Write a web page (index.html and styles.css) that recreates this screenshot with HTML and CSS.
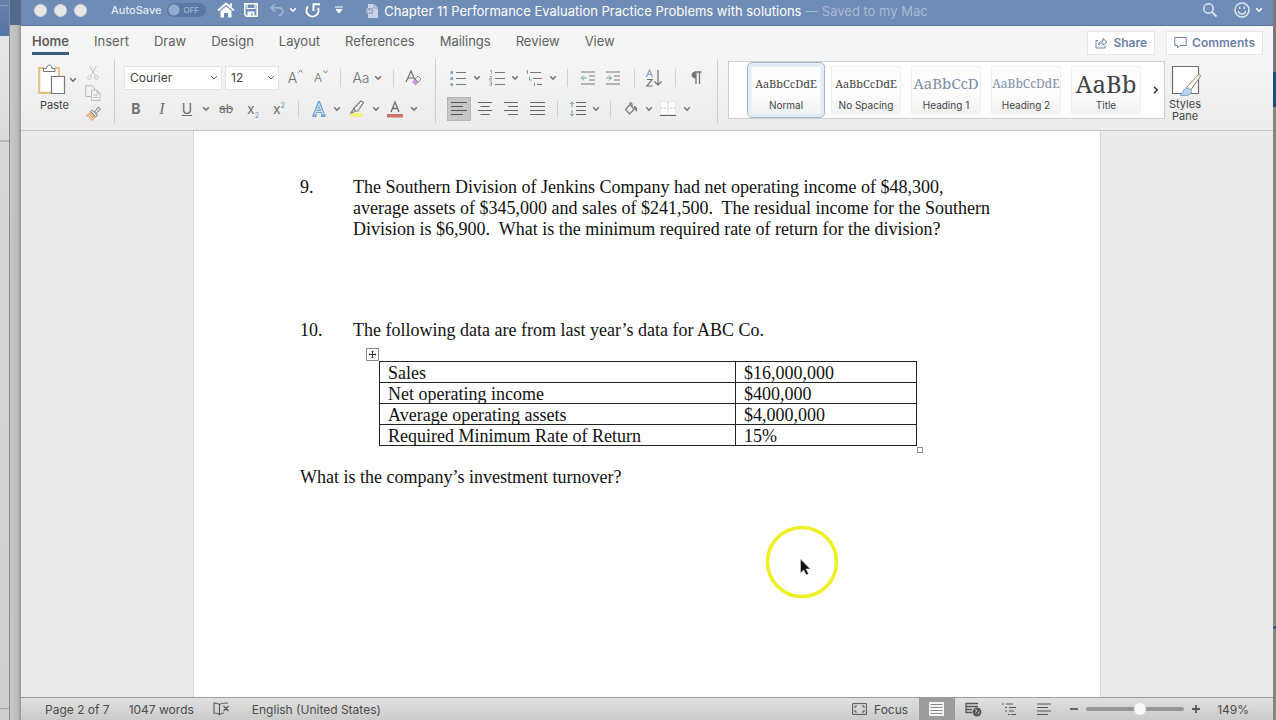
FILE: index.html
```html
<!DOCTYPE html>
<html lang="en">
<head>
<meta charset="utf-8">
<title>Chapter 11 Performance Evaluation Practice Problems with solutions</title>
<link rel="stylesheet" href="styles.css">
</head>
<body>
<svg class="defs" aria-hidden="true">
  <symbol id="chev" viewBox="0 0 8 6"><path d="M1.200 1.300L4 4.200l2.800-2.900" fill="none" stroke="currentColor" stroke-width="1.500"/></symbol>
</svg>
<div class="desktop">
  <div class="behind-a"></div>
  <div class="behind-b"></div>
  <div class="window">
    <header class="titlebar">
      <div class="title-left">
        <div class="lights"><button aria-label="Close"></button><button aria-label="Minimize"></button><button aria-label="Zoom"></button></div>
        <label class="autosave"><span>AutoSave</span><span class="toggle"><input type="checkbox"><span class="off">OFF</span></span></label>
        <div class="quick">
          <button aria-label="Home"><svg width="18" height="16" viewBox="0 0 18 16"><path d="M1 8.500L9 1.500l8 7" fill="none" stroke="#fff" stroke-width="1.800"/><path d="M3.500 9L9 4.300 14.500 9v6.500H11V11H7v4.500H3.500z" fill="#fff"/><path d="M13 1.500h2V5l-2-1.500z" fill="#fff"/></svg></button>
          <button aria-label="Save"><svg width="16" height="16" viewBox="0 0 16 16"><path d="M1.800 1.800h12.400v12.400H3.500l-1.700-1.700z" fill="none" stroke="#fff" stroke-width="1.600"/><path d="M4 2v4.500h8V2" fill="none" stroke="#fff" stroke-width="1.200"/><path d="M4.500 9.500h7V14h-2v-2.500H8V14H4.500z" fill="#fff"/></svg></button>
          <button aria-label="Undo" class="dim"><svg width="16" height="14" viewBox="0 0 16 14"><path d="M6 1L2 4.800l4 3.800M2 4.800h8c5 0 5 7-.5 7.700" fill="none" stroke="currentColor" stroke-width="1.700"/></svg></button>
          <button aria-label="Undo options"><svg width="8" height="6"><use href="#chev"/></svg></button>
          <button aria-label="Repeat"><svg width="18" height="16" viewBox="0 0 18 16"><path d="M4 4.500A6 6 0 1 0 14 6M9.500 9V2.200H16" fill="none" stroke="#fff" stroke-width="2"/></svg></button>
          <button aria-label="Customize toolbar"><svg width="8" height="8" viewBox="0 0 8 8"><path d="M0 1h8M1 3.500h6L4 7z" fill="#fff" stroke="#fff"/></svg></button>
        </div>
      </div>
      <h1 class="doc-title"><svg width="12" height="14" viewBox="0 0 12 14"><path d="M2 0h6l4 4v10H2z" fill="#c8d2e3"/><path d="M8 0v4h4" fill="none" stroke="#8ba0c4"/><path d="M0 4h7v6H0z" fill="#93a7c8"/><path d="M1.500 5.500l1 3 1-2 1 2 1-3" fill="none" stroke="#dce3ee" stroke-width=".8"/></svg><span>Chapter 11 Performance Evaluation Practice Problems with solutions <span class="saved">— Saved to my Mac</span></span></h1>
      <div class="title-right">
        <button aria-label="Search"><svg width="16" height="16" viewBox="0 0 16 16"><circle cx="6.500" cy="6.500" r="4.700" fill="none" stroke="#dfe6f1" stroke-width="1.500"/><path d="M10 10l4.500 4.500" stroke="#dfe6f1" stroke-width="1.800"/></svg></button>
        <button aria-label="Feedback"><svg width="16" height="16" viewBox="0 0 16 16"><circle cx="8" cy="8" r="7" fill="none" stroke="#dfe6f1" stroke-width="1.500"/><path d="M5.700 4.500v2.500M10.300 4.500v2.500M4.200 9c1 4 6.600 4 7.600 0" fill="none" stroke="#dfe6f1" stroke-width="1.300"/></svg></button>
        <button aria-label="Feedback options"><svg width="8" height="6"><use href="#chev"/></svg></button>
      </div>
    </header>

    <nav class="tabs">
      <a href="#" class="active">Home</a><a href="#">Insert</a><a href="#">Draw</a><a href="#">Design</a><a href="#">Layout</a><a href="#">References</a><a href="#">Mailings</a><a href="#">Review</a><a href="#">View</a>
      <div class="tab-actions">
        <button><svg width="13" height="13" viewBox="0 0 13 13"><path d="M3 4.500H1v7.500h9V9.500M3.500 9C4 6 5.500 5 8 5V2.500L12 6 8 9.300V7C6 7 4.500 7.500 3.500 9z" fill="none" stroke="currentColor"/></svg>Share</button>
        <button><svg width="13" height="13" viewBox="0 0 13 13"><path d="M.8 1.500h11.400v8H6L3.500 12V9.500H.8z" fill="none" stroke="currentColor"/></svg>Comments</button>
      </div>
    </nav>

    <div class="ribbon">
      <section class="group clipboard">
        <button class="paste">
          <span class="paste-top"><svg width="29" height="32" viewBox="0 0 29 32"><path d="M7 4H2v25h12M18 4h4v8" fill="none" stroke="#e9bd80" stroke-width="1.800"/><path d="M4 6h16v6h-6v15H4z" fill="#fff"/><path d="M6.500 7.500v-3h3c0-4.500 5.500-4.500 5.500 0h3v3z" fill="#fff" stroke="#777"/><path d="M14.500 12.500h13v17h-13z" fill="#fff" stroke="#777" stroke-width="1.200"/></svg><svg class="chev" width="8" height="6"><use href="#chev"/></svg></span>
          <span>Paste</span>
        </button>
        <div class="clip-tools">
          <button aria-label="Cut"><svg width="12" height="14" viewBox="0 0 12 14"><path d="M2.500 0L8.500 10M9.500 0L3.500 10" stroke="#c4c4c4"/><circle cx="2.500" cy="11.500" r="1.800" fill="none" stroke="#c4c4c4"/><circle cx="9.500" cy="11.500" r="1.800" fill="none" stroke="#c4c4c4"/></svg></button>
          <button aria-label="Copy"><svg width="16" height="16" viewBox="0 0 16 16"><path d="M6 11.500H.7V.700H7L9.500 3v2" fill="none" stroke="#bdbdbd"/><path d="M6.500 5H12l3 3v7.500H6.500zM12 5v3h3M8.500 10h4.500M8.500 12.500h4.500" fill="none" stroke="#bdbdbd"/></svg></button>
          <button aria-label="Format painter"><svg width="16" height="16" viewBox="0 0 16 16"><path d="M.5 9.500L6 5.500l5 5L7.500 15.500z" fill="#f0b68c"/><path d="M2 10.500l4 4M4 9l4 4" stroke="#fff" stroke-width=".7"/><path d="M5.500 5.500L7.300 4l5.200 5.200-1.800 1.800z" fill="#e8e8e8" stroke="#777"/><path d="M9.500 6L13.500 1l2 1.800-4.500 5z" fill="#e8e8e8" stroke="#777"/></svg></button>
        </div>
      </section>

      <section class="group">
        <div class="row font-1">
          <select aria-label="Font"><option>Courier</option></select>
          <select aria-label="Font size"><option>12</option></select>
          <button aria-label="Increase font size"><span class="grow">A<svg width="5" height="4" viewBox="0 0 5 4"><path d="M.5 3.500l2-2.500 2 2.500" fill="none" stroke="#777"/></svg></span></button>
          <button aria-label="Decrease font size"><span class="grow small">A<svg width="5" height="4" viewBox="0 0 5 4"><path d="M.5.5l2 2.500 2-2.500" fill="none" stroke="#777"/></svg></span></button>
          <i class="sep"></i>
          <button aria-label="Change case" class="case">Aa<svg width="8" height="6"><use href="#chev"/></svg></button>
          <i class="sep"></i>
          <button aria-label="Clear formatting"><svg width="18" height="18" viewBox="0 0 18 18"><path d="M2 13L7 2l4 9M4 9h6" fill="none" stroke="#6f6f6f" stroke-width="1.200"/><path d="M8 13l3-3 3.500 3.500-3 3z" fill="#c994d6"/><path d="M11 10l3-3 3 3-2.800 3.200z" fill="#f5f5f5" stroke="#888"/></svg></button>
        </div>
        <div class="row font-2">
          <button><b>B</b></button>
          <button class="ital">I</button>
          <button><u>U</u></button>
          <button aria-label="Underline options"><svg width="8" height="6"><use href="#chev"/></svg></button>
          <button class="strike"><s>ab</s></button>
          <button aria-label="Subscript"><span class="script">x<sub>2</sub></span></button>
          <button aria-label="Superscript"><span class="script">x<sup>2</sup></span></button>
          <i class="sep"></i>
          <button aria-label="Text effects"><svg width="16" height="16" viewBox="0 0 16 16"><path d="M1.500 14.500h4M10 14.500h4.500M3.500 14L8 2l4.500 12M5 10.500h6" fill="none" stroke="#6fa1d2" stroke-width="3.200"/><path d="M3.500 14L8 3l4.500 11M5 10.500h6" fill="none" stroke="#cfe2f3" stroke-width="1.200"/></svg></button>
          <button aria-label="Text effects options"><svg width="8" height="6"><use href="#chev"/></svg></button>
          <button aria-label="Highlight"><svg width="18" height="18" viewBox="0 0 18 18"><path d="M2 13h13v4H2z" fill="#f3f07e"/><path d="M6 8l7-7 2.500 1.500L10 11H7zM6 8l-3 5 5-2" fill="#f5f5f5" stroke="#777" stroke-width="1.100"/></svg></button>
          <button aria-label="Highlight options"><svg width="8" height="6"><use href="#chev"/></svg></button>
          <button aria-label="Font color"><svg width="18" height="18" viewBox="0 0 18 18"><path d="M1 14h16v3.500H1z" fill="#cf7567"/><path d="M5 12L9 2l4 10M6.500 8.500h5" fill="none" stroke="#6d6d6d" stroke-width="1.300"/></svg></button>
          <button aria-label="Font color options"><svg width="8" height="6"><use href="#chev"/></svg></button>
        </div>
      </section>

      <section class="group">
        <div class="row para-1">
          <button aria-label="Bullets"><svg width="16" height="16" viewBox="0 0 16 16"><path d="M6 2.500h10M6 8.500h10M6 14.500h10" stroke="#777"/><path d="M.5 2.500h2.500M.5 8.500h2.500M.5 14.500h2.500" stroke="#6f9bb9" stroke-width="2.500"/></svg></button>
          <button aria-label="Bullet options"><svg width="8" height="6"><use href="#chev"/></svg></button>
          <button aria-label="Numbering"><svg width="16" height="16" viewBox="0 0 16 16"><path d="M6 2.500h10M6 8.500h10M6 14.500h10" stroke="#777"/><path d="M1 .5h1.500V4M.5 6.500h2v2h-2v1.500H3M.5 12h2v3.500h-2M1 13.800h1.500" fill="none" stroke="#86a9b4" stroke-width=".9"/></svg></button>
          <button aria-label="Numbering options"><svg width="8" height="6"><use href="#chev"/></svg></button>
          <button aria-label="Multilevel list"><svg width="16" height="16" viewBox="0 0 16 16"><path d="M4 2.500h11M7 8.500h9M11 14.500h5" stroke="#777"/><path d="M.5.5h1V4M3.500 6.500v3.500h2.500M8.500 12.500V16" fill="none" stroke="#7aa99a"/></svg></button>
          <button aria-label="Multilevel options"><svg width="8" height="6"><use href="#chev"/></svg></button>
          <i class="sep"></i>
          <button aria-label="Decrease indent"><svg width="16" height="14" viewBox="0 0 16 14"><path d="M1 1h14M9 5h6M9 9h6M1 13h14" stroke="#777"/><path d="M7 7H1.500M4 4.500L1.500 7 4 9.500" fill="none" stroke="#74a799"/></svg></button>
          <button aria-label="Increase indent"><svg width="16" height="14" viewBox="0 0 16 14"><path d="M1 1h14M9 5h6M9 9h6M1 13h14" stroke="#777"/><path d="M1 7h5.500M4 4.500L6.500 7 4 9.500" fill="none" stroke="#74a799"/></svg></button>
          <i class="sep"></i>
          <button aria-label="Sort"><svg width="18" height="18" viewBox="0 0 18 18"><path d="M1.500 8L4.500 1l3 7M2.500 5.500h4" fill="none" stroke="#7fa6d0" stroke-width="1.200"/><path d="M2 10.500h5L2 17h5.500M13 1v15M9.500 12.500L13 16l3.500-3.500" fill="none" stroke="#707070" stroke-width="1.200"/></svg></button>
          <i class="sep"></i>
          <button aria-label="Show marks"><svg width="12" height="14" viewBox="0 0 12 14"><path d="M6 1v12M9.500 1v12M5 1h6.500" stroke="#777" stroke-width="1.300"/><path d="M6 .500v7C0 7.500 0 .500 6 .500z" fill="#777"/></svg></button>
        </div>
        <div class="row para-2">
          <button aria-label="Align left" class="on"><svg width="16" height="16" viewBox="0 0 16 16"><path d="M0 1.500h16M0 5.500h12M0 9.500h16M0 13.500h12" stroke="#555"/></svg></button>
          <button aria-label="Align center"><svg width="16" height="16" viewBox="0 0 16 16"><path d="M1 1.500h14M3.500 5.500h9M1 9.500h14M3.500 13.500h9" stroke="#666"/></svg></button>
          <button aria-label="Align right"><svg width="16" height="16" viewBox="0 0 16 16"><path d="M1 1.500h14M5 5.500h10M1 9.500h14M5 13.500h10" stroke="#666"/></svg></button>
          <button aria-label="Justify"><svg width="16" height="16" viewBox="0 0 16 16"><path d="M1 1.500h15M1 5.500h15M1 9.500h15M1 13.500h15" stroke="#666"/></svg></button>
          <i class="sep"></i>
          <button aria-label="Line spacing"><svg width="18" height="16" viewBox="0 0 18 16"><path d="M7 1.500h10M7 5.500h10M7 9.500h10M7 13.500h10" stroke="#666"/><path d="M3 1v5.500M1 3l2-2 2 2M3 15V9M1 13l2 2 2-2" fill="none" stroke="#7398b5"/></svg></button>
          <button aria-label="Spacing options"><svg width="8" height="6"><use href="#chev"/></svg></button>
          <i class="sep"></i>
          <button aria-label="Shading"><svg width="14" height="14" viewBox="0 0 14 14"><path d="M6 2.500l4 5L5.500 12 1.500 7.500 6 2.500V1c1.500-1 2.500 1 2 3.500" fill="none" stroke="#777" stroke-width="1.200"/><path d="M9.500 4c3 0 4 2 3.500 6l-2.500-3z" fill="#777"/></svg></button>
          <button aria-label="Shading options"><svg width="8" height="6"><use href="#chev"/></svg></button>
          <button aria-label="Borders"><svg width="16" height="16" viewBox="0 0 16 16"><path d="M.5.500h15v13H.500z" fill="#fff" stroke="#ddd" stroke-dasharray="2 1"/><path d="M8 1v12M1 7h14" stroke="#ccc" stroke-dasharray="2 1"/><path d="M0 14.500h16" stroke="#666"/></svg></button>
          <button aria-label="Border options"><svg width="8" height="6"><use href="#chev"/></svg></button>
        </div>
      </section>

      <section class="group styles">
        <div class="gallery">
          <button class="card picked"><span class="sample slab">AaBbCcDdE</span><span class="name">Normal</span></button>
          <button class="card"><span class="sample slab">AaBbCcDdE</span><span class="name">No Spacing</span></button>
          <button class="card"><span class="sample h1">AaBbCcD</span><span class="name">Heading 1</span></button>
          <button class="card"><span class="sample h2">AaBbCcDdE</span><span class="name">Heading 2</span></button>
          <button class="card"><span class="sample big">AaBb</span><span class="name">Title</span></button>
          <button class="more" aria-label="More styles"><svg width="6" height="8" viewBox="0 0 6 8"><path d="M1 .8L4.200 4 1 7.200" fill="none" stroke="#333" stroke-width="1.500"/></svg></button>
        </div>
        <button class="pane"><svg width="32" height="34" viewBox="0 0 32 34"><path d="M3.500 4.500h26v27h-26z" fill="#fff" stroke="#6d6d6d" stroke-width="1.200"/><path d="M17 26L29 13c2-1 3 0 2 2L21 29z" fill="#fff" stroke="#9b7b5c"/><path d="M11 33c3-1 3-7 7-7s6 4 3 6c-2 2-7 2-10 1z" fill="#b9d4ec" stroke="#7aa3c9"/></svg><span>Styles<br>Pane</span></button>
      </section>
    </div>

    <main class="workspace">
      <article class="page">
        <div class="question"><span>9.</span><p>The Southern Division of Jenkins Company had net operating income of $48,300,<br>average assets of $345,000 and sales of $241,500.&nbsp; The residual income for the Southern<br>Division is $6,900.&nbsp; What is the minimum required rate of return for the division?</p></div>
        <div class="question ten"><span>10.</span><p>The following data are from last year’s data for ABC Co.</p></div>
        <div class="table-wrap">
          <svg class="move" width="13" height="13" viewBox="0 0 13 13"><path d="M.5.500h12v12H.500z" fill="#fff" stroke="#888"/><path d="M6.500 3v7M3 6.500h7" stroke="#333"/><path d="M5.200 4l1.300-1.500L7.800 4zM5.200 9l1.300 1.500L7.800 9zM4 5.200L2.500 6.500 4 7.800zM9 5.200l1.500 1.300L9 7.800z" fill="#333"/></svg>
          <table>
            <tr><td>Sales</td><td>$16,000,000</td></tr>
            <tr><td>Net operating income</td><td>$400,000</td></tr>
            <tr><td>Average operating assets</td><td>$4,000,000</td></tr>
            <tr><td>Required Minimum Rate of Return</td><td>15%</td></tr>
          </table>
          <i class="resize"></i>
        </div>
        <p>What is the company’s investment turnover?</p>
      </article>
      <svg class="pointer" width="74" height="74" viewBox="0 0 74 74"><circle cx="37" cy="37" r="34.500" fill="none" stroke="#edf022" stroke-width="3.500"/><path d="M35.500 34v14l3.200-3 2.500 5 2.300-1.200-2.500-4.800h4.300z" fill="#111" stroke="#ddd" stroke-width=".6"/></svg>
    </main>

    <footer class="status">
      <span class="pages">Page 2 of 7</span>
      <span class="words">1047 words</span>
      <button class="proof" aria-label="Proofing"><svg width="17" height="14" viewBox="0 0 17 14"><path d="M6.500 2.500C5 1 3 1 1 1v10c2 0 4 0 5.500 1.500C8 11.500 9 11 11 11M6.500 12V2.500C8 1 9.500 1 15 1M10.500 4l5 5M15.500 4l-5 5" fill="none" stroke="#555" stroke-width="1.100"/></svg></button>
      <span>English (United States)</span>
      <div class="status-right">
        <button class="focus"><svg width="15" height="12" viewBox="0 0 15 12"><path d="M.600.600h13.800v10.800H.600z" fill="none" stroke="#555"/><path d="M5 3H3v2M10 3h2v2M5 9H3V7M10 9h2V7" fill="none" stroke="#555"/></svg>Focus</button>
        <div class="views">
          <button aria-label="Print layout" class="on"><svg width="16" height="14" viewBox="0 0 16 14"><path d="M0 0h15v14H0z" fill="#f4f4f4"/><path d="M1.500 2.500h12M1.500 5.500h12M1.500 8.500h12M1.500 11.500h12" stroke="#8a8a8a"/></svg></button>
          <button aria-label="Web layout"><svg width="17" height="15" viewBox="0 0 17 15"><path d="M1 1.500h12M1 4.500h12M1 7.500h6M1 10.500h6M1 1v10" fill="none" stroke="#555" stroke-width="1.300"/><circle cx="12" cy="10" r="4.500" fill="#5a5a5a"/><path d="M10 7.500l2 1-1.500 2M13 12l1.500-2.500" fill="none" stroke="#ccc"/></svg></button>
          <button aria-label="Outline"><svg width="16" height="12" viewBox="0 0 16 12"><path d="M1 1h2M5 1h7M4 4.500h2M8 4.500h7M4 8h2M8 8h5M7 11.500h2M10 11.500h5" stroke="#555"/></svg></button>
          <button aria-label="Draft"><svg width="14" height="12" viewBox="0 0 14 12"><path d="M0 1h14M0 4.500h11M0 8h14M0 11.500h11" stroke="#555" stroke-width="1.200"/></svg></button>
        </div>
        <button aria-label="Zoom out"><svg width="10" height="10" viewBox="0 0 10 10"><path d="M1 5h8" stroke="#555" stroke-width="1.800"/></svg></button>
        <input type="range" min="0" max="100" value="56" aria-label="Zoom">
        <button aria-label="Zoom in"><svg width="10" height="10" viewBox="0 0 10 10"><path d="M1 5h8M5 1v8" stroke="#555" stroke-width="1.800"/></svg></button>
        <span class="percent">149%</span>
      </div>
    </footer>
  </div>
  <div class="behind-r"></div>
</div>
</body>
</html>
```
FILE: styles.css
```css
* { box-sizing: border-box; }
body { margin: 0; font-family: Inter, "Liberation Sans", sans-serif; font-size: 13px; color: #555; }
button { border: 0; padding: 0; background: none; font: inherit; color: inherit; display: flex; align-items: center; justify-content: center; }
svg { display: block; flex: none; }
p { margin: 0; }
.defs { position: absolute; width: 0; height: 0; }

.desktop { display: flex; height: 100vh; overflow: hidden; }
.behind-a { width: 10px; flex: none; border-right: 1px solid #8c8c8c; background: linear-gradient(#6380ad 5px, #8199bd 5px, #8199bd 6px, #6380ad 6px, #56749f 36px, #e6e6e6 36px, #dcdcdc 140px, #b5b5b5 140px, #b5b5b5 142px, #d8d8d8 142px, #cfcfcf 708px, #a5a5a5 708px, #a5a5a5 709px, #cfcfcf 709px); }
.behind-b { width: 11px; flex: none; background: linear-gradient(#51698f 25px, transparent 25px), linear-gradient(90deg, #c8c8c8, #bcbcbc 70%, #969696); }
.behind-r { width: 3px; flex: none; background: linear-gradient(#77777d 72px, #234a7c 72px, #234a7c 107px, #858585 107px, #858585 626px, #345a8c 626px, #345a8c 629px, #858585 629px); }
.window { flex: 1; min-width: 0; display: flex; flex-direction: column; background: #ebebeb; }

.titlebar { display: grid; grid-template-columns: 1fr auto 1fr; align-items: center; height: 26px; padding-bottom: 5px; background: #6f8cb6; border-bottom: 1px solid #5d7595; color: #fff; }
.title-left, .lights, .autosave, .quick, .title-right { display: flex; align-items: center; }
.lights { gap: 7px; margin-left: 13px; }
.lights button { width: 13px; height: 13px; border-radius: 50%; background: #e8e6e5; border: 1px solid #d3d5da; }
.autosave { gap: 6px; margin-left: 24px; font-size: 11px; font-weight: 500; color: #e4eaf3; }
.toggle { display: grid; align-items: center; }
.toggle > * { grid-area: 1 / 1; }
.toggle input { appearance: none; margin: 0; width: 39px; height: 14px; border-radius: 7px; background: radial-gradient(circle at 7px 7px, #93abcf 5px, transparent 6px), #5b78a4; }
.off { padding-left: 16px; font-size: 8px; color: #a3b6d3; }
.quick { margin-left: 11px; display: grid; grid-template-columns: 18px 32px 20px 12px 28px 24px; }
.dim { color: #9fb2d2; }
.doc-title { display: flex; align-items: center; gap: 6px; margin: 0; padding-top: 2px; font-size: 13px; line-height: 16px; font-weight: 400; white-space: nowrap; }
.saved { color: #a9bad6; }
.title-right { justify-content: flex-end; padding-right: 10px; gap: 5px; }
.title-right button:first-child { margin-right: 11px; }

.tabs { display: flex; align-items: center; gap: 25px; height: 33px; padding: 0 10px 0 11px; background: #f5f5f5; }
.tabs a { color: #606060; text-decoration: none; line-height: 21px; padding-top: 1px; border-bottom: 3px solid transparent; }
.tabs .active { font-weight: 600; border-color: #3a5d7e; }
.tab-actions { display: flex; gap: 11px; margin-left: auto; }
.tab-actions button { height: 24px; padding: 0 7px; gap: 5px; background: #fff; border: 1px solid #e9e7e2; color: #6c82a9; font-size: 12px; font-weight: 600; }

.ribbon { display: flex; align-items: flex-start; height: 72px; flex: none; background: linear-gradient(#f5f5f5, #ececec); border-bottom: 1px solid #c4c4c4; }
.group { height: 64px; padding: 3px 8px 0 9px; border-right: 1px solid #cfcfcf; }
.clipboard { display: flex; width: 94px; padding: 5px 0 0 16px; }
.paste { flex-direction: column; align-items: flex-start; justify-content: flex-start; gap: 2px; width: 48px; font-size: 11px; color: #444; }
.paste > span { padding-left: 3px; }
.paste .paste-top { display: flex; align-items: center; gap: 3px; padding-left: 0; color: #666; }
.clip-tools { display: grid; grid-template-rows: 18px 22px 20px; justify-items: center; width: 16px; }
.row { display: grid; align-items: center; justify-items: center; height: 31px; }
.font-1 { grid-template-columns: 101px 57px 27px 24px 14px 40px 12px 28px; }
.font-2 { grid-template-columns: 24px 28px 22px 16px 24px 30px 22px 16px 26px 10px 30px 8px 30px 8px; color: #707070; font-size: 14px; }
.para-1 { grid-template-columns: 26px 12px 28px 8px 30px 8px 20px 22px 28px 14px 26px 16px 26px; }
.para-2 { grid-template-columns: 28px 24px 28px 24px 16px 26px 10px 18px 24px 12px 26px 12px; }
.row button { height: 24px; color: #707070; }
.row .on { width: 24px; background: #c6c6c6; border: 1px solid #b5b5b5; }
.sep { width: 1px; height: 18px; background: #d2d2d2; }
.font-1 select { justify-self: start; appearance: none; width: 98px; height: 24px; border: 1px solid #e4e4e4; border-radius: 0; padding: 0 5px; font: inherit; font-size: 12px; color: #444; background: linear-gradient(45deg, transparent 40%, #666 40%, #666 64%, transparent 64%) right 7px center / 3px 3px no-repeat, linear-gradient(-45deg, transparent 40%, #666 40%, #666 64%, transparent 64%) right 4px center / 3px 3px no-repeat, #fff; }
.font-1 select + select { width: 54px; }
.grow { display: flex; gap: 1px; font-size: 14px; font-weight: 300; }
.small { font-size: 12px; }
.row .case { gap: 4px; font-size: 14px; font-weight: 300; }
.row .ital { font-family: "Liberation Serif", serif; font-style: italic; font-size: 16px; }
.strike { font-size: 12px; }
.script { line-height: 16px; }
.script sub, .script sup { font-size: 7px; line-height: 1px; color: #6f94a8; }

.styles { display: flex; gap: 4px; padding: 2px 0 0 10px; border: 0; }
.gallery { display: flex; align-items: center; gap: 10px; height: 58px; padding: 0 3px 0 22px; background: #fff; border: 1px solid #cfcfcf; }
.card { flex-direction: column; justify-content: flex-end; width: 70px; height: 48px; border: 1px solid #f0f0f0; background: linear-gradient(#fdfdfd 60%, #f2f2f2); overflow: hidden; white-space: nowrap; }
.picked { outline: 1px solid #a9b4c0; outline-offset: 3px; box-shadow: 0 0 0 3px #e3edf7; border-radius: 1px; }
.sample { display: flex; align-items: center; justify-content: center; height: 30px; width: 68px; overflow: hidden; }
.name { font-size: 10px; line-height: 14px; padding-bottom: 1px; color: #444; }
.slab, .h1, .h2, .big { font-family: "Noto Serif", "DejaVu Serif", serif; }
.slab { font-size: 11px; color: #444; }
.h1 { font-size: 15px; color: #7d8ea6; }
.h2 { font-size: 12px; color: #7d8ea6; }
.big { font-size: 24px; color: #444; }
.more { width: 10px; }
.pane { flex-direction: column; gap: 2px; font-size: 11px; line-height: 12px; color: #444; }

.workspace { position: relative; flex: 1; min-height: 0; display: flex; justify-content: center; overflow: hidden; }
.page { width: 908px; padding: 46px 106px 0; background: #fff; border: 1px solid #d4d4d4; border-width: 0 1px; color: #111; font-family: "Liberation Serif", "Times New Roman", serif; font-size: 18px; line-height: 21px; white-space: nowrap; }
.question { display: grid; grid-template-columns: 53px 1fr; }
.ten { margin-top: 80px; }
.table-wrap { position: relative; width: 538px; margin: 20px 0 21px 79px; }
table { width: 100%; border-collapse: collapse; line-height: 18px; }
td { padding: 2px 8px 0; border: 1px solid #222; }
td:first-child { width: 356px; }
.move { position: absolute; left: -13px; top: -13px; }
.resize { position: absolute; right: -6px; bottom: -7px; width: 6px; height: 6px; border: 1px solid #888; background: #fff; }
.pointer { position: absolute; left: 744px; top: 394px; }

.status { display: flex; align-items: center; height: 23px; flex: none; padding-left: 24px; border-top: 1px solid #9b9b9b; background: linear-gradient(#e0e0e0, #cbcbcb); font-size: 12px; color: #4c4c4c; }
.words { margin-left: 19px; }
.proof { margin: 0 22px 0 19px; }
.status-right { display: flex; align-items: center; margin-left: auto; padding-right: 24px; }
.focus { gap: 7px; margin-right: 11px; }
.views { display: grid; grid-template-columns: 36px 36px 36px 34px; margin-right: 8px; }
.views button { height: 22px; }
.views .on { background: #9c9c9c; }
.status input { appearance: none; width: 98px; height: 12px; margin: 0 7px; background: none; }
.status input::-webkit-slider-runnable-track { height: 4px; border-radius: 2px; background: #979797; }
.status input::-webkit-slider-thumb { appearance: none; width: 12px; height: 12px; margin-top: -4px; border-radius: 50%; background: #fafafa; }
.percent { margin-left: 16px; }
```
